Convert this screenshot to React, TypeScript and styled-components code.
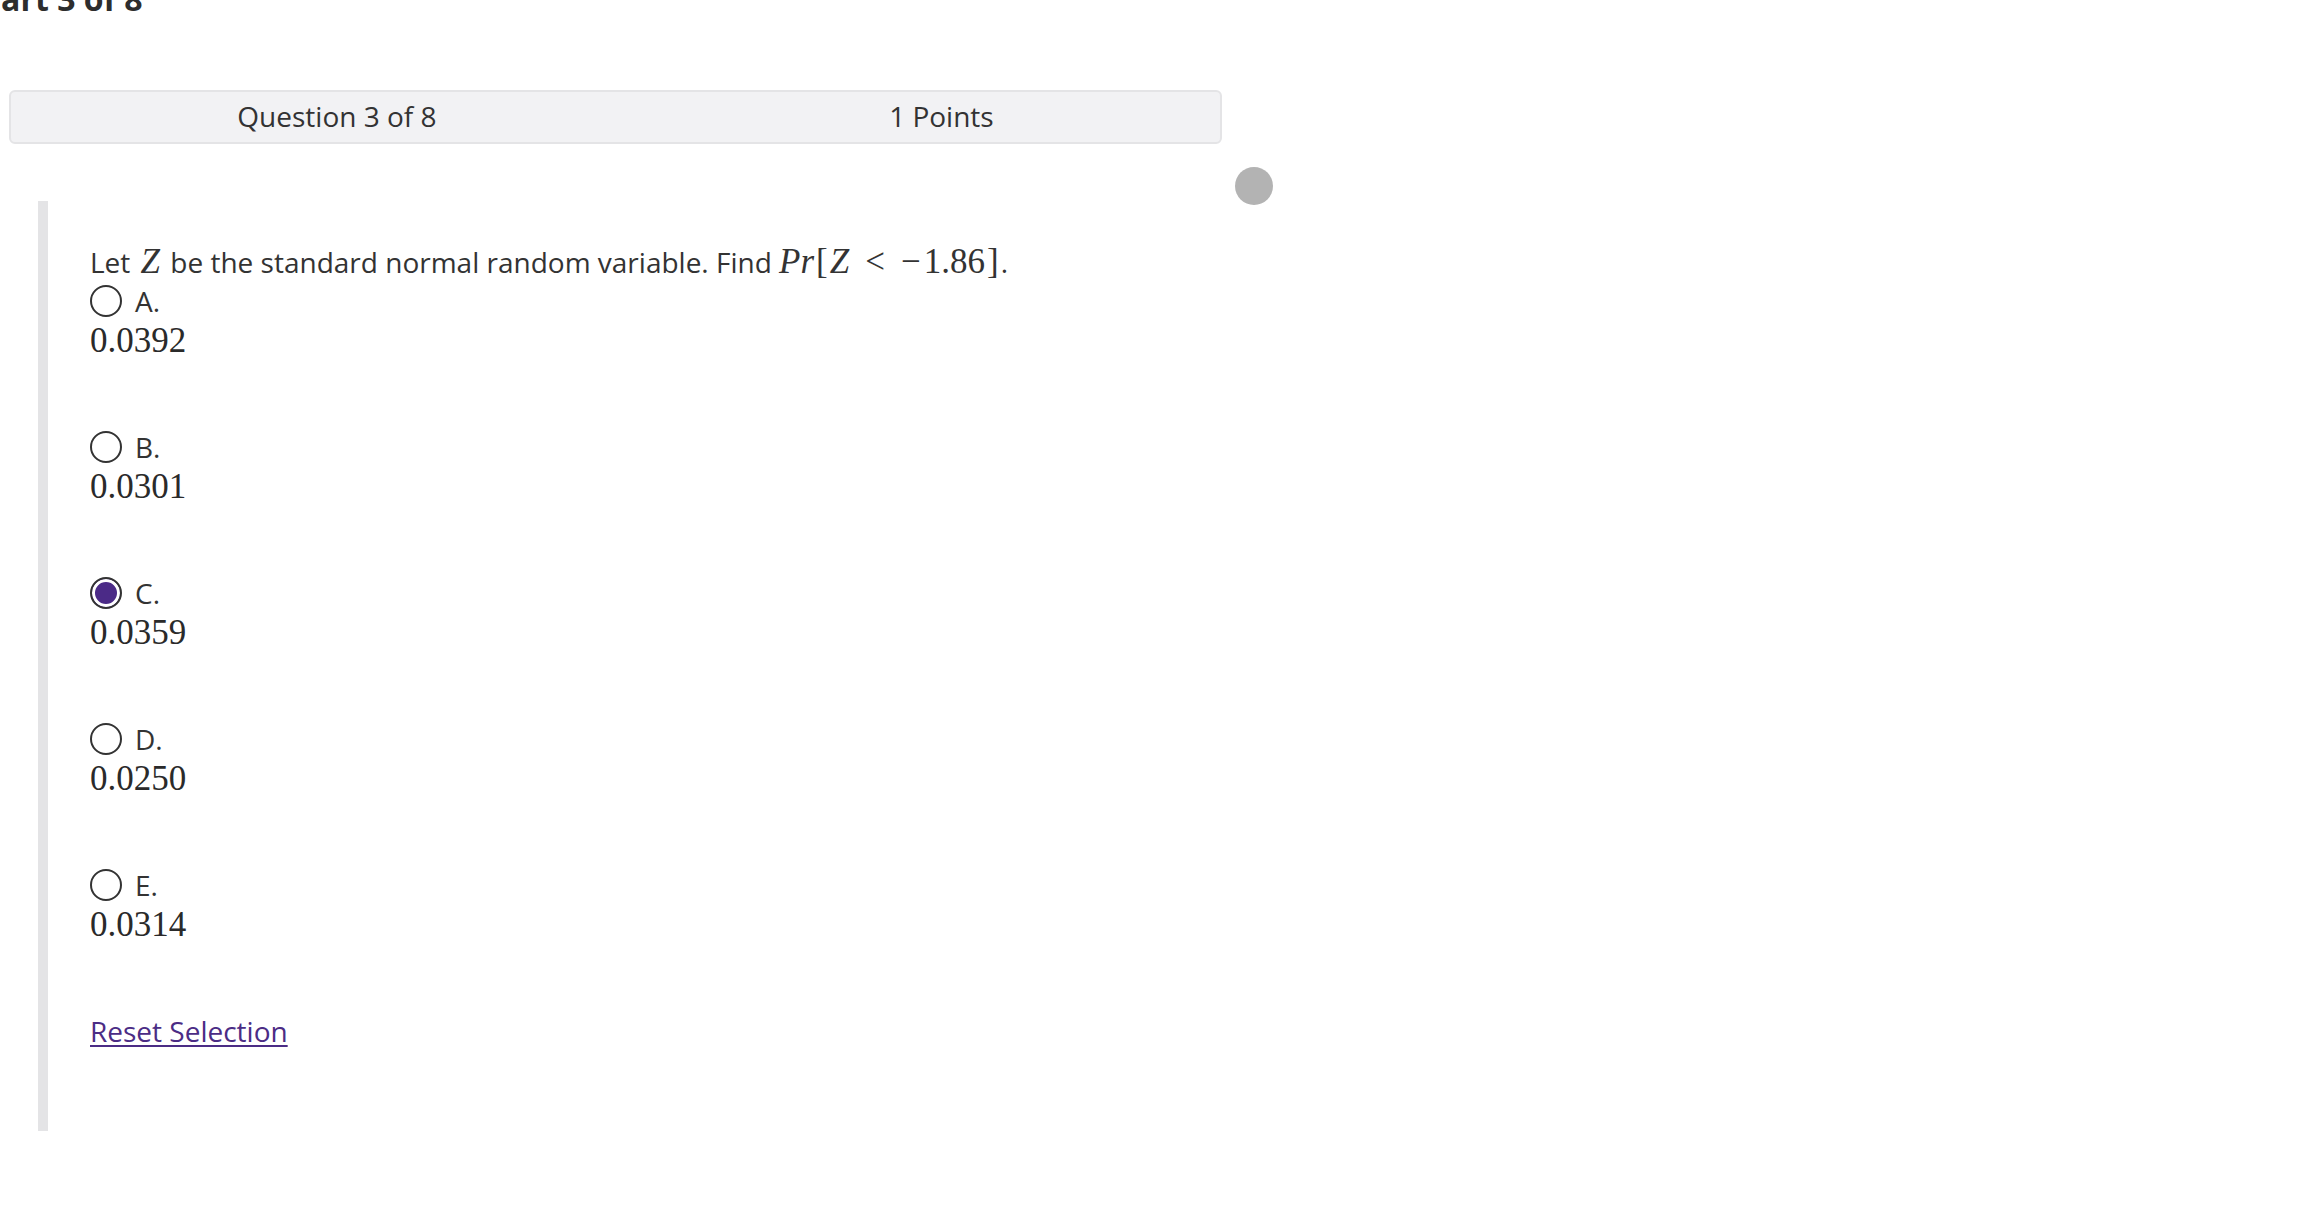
import React from 'react'
import styled, { createGlobalStyle } from 'styled-components'

const GlobalStyle = createGlobalStyle`
  html, body {
    margin: 0;
    padding: 0;
    background: #ffffff;
    overflow: hidden;
  }
  body {
    font-family: "Open Sans", "Noto Sans", sans-serif;
    color: #333333;
  }
`

const Page = styled.div`
  position: relative;
  display: flow-root;
  width: 2319px;
  height: 1218px;
`

const PartTitle = styled.h1`
  margin: -24px 0 0 -19px;
  font-size: 32px;
  line-height: 45px;
  font-weight: 700;
  color: #2d2d2d;
  white-space: nowrap;
`

const QuestionHeader = styled.div`
  display: flex;
  justify-content: space-around;
  align-items: center;
  width: 1213px;
  box-sizing: border-box;
  margin: 69px 0 0 9px;
  padding-bottom: 2px;
  background: #f2f2f4;
  border: 2px solid #e4e4e6;
  border-radius: 6px;
  font-size: 28px;
  line-height: 48px;
  color: #333333;
`

const Spinner = styled.div`
  position: absolute;
  left: 1235px;
  top: 167px;
  width: 38px;
  height: 38px;
  border-radius: 50%;
  background: #b3b3b3;
`

const QuestionBody = styled.div`
  margin: 57px 0 0 38px;
  width: 1180px;
  border-left: 10px solid #e4e4e6;
  padding: 43px 0 80px 42px;
  font-size: 28px;
`

const Prompt = styled.p`
  margin: 0;
  line-height: 37px;
  white-space: nowrap;
`

const Math = styled.span<{ $italic?: boolean; $pad?: number }>`
  font-family: "Liberation Serif", "DejaVu Serif", serif;
  font-size: 35px;
  line-height: 1;
  font-style: ${(p) => (p.$italic ? 'italic' : 'normal')};
  margin: 0 ${(p) => p.$pad ?? 0}px;
`

const Bracket = styled.span`
  margin: 0 2px;
`

const Rel = styled.span`
  margin: 0 16px;
`

const Minus = styled.span`
  margin-right: 3px;
`

const Option = styled.div`
  margin-bottom: 66px;
`

const OptionLabel = styled.label`
  display: flex;
  align-items: center;
  gap: 13px;
  height: 40px;
  line-height: 40px;
  cursor: pointer;
`

const Radio = styled.span<{ $checked?: boolean }>`
  display: inline-block;
  box-sizing: border-box;
  width: 32px;
  height: 32px;
  border-radius: 50%;
  border: 2px solid #333333;
  background: ${(p) => (p.$checked ? '#4b2a87' : '#ffffff')};
  box-shadow: ${(p) => (p.$checked ? 'inset 0 0 0 3px #ffffff' : 'none')};
  flex-shrink: 0;
`

const Value = styled.div`
  font-family: "Liberation Serif", "DejaVu Serif", serif;
  font-size: 35px;
  line-height: 40px;
  color: #2a2a2a;
`

const ResetLink = styled.a`
  display: inline-block;
  line-height: 40px;
  color: #4b2c85;
  text-decoration: underline;
  text-underline-offset: 3px;
  cursor: pointer;
`

const options = [
  { key: 'A', value: '0.0392' },
  { key: 'B', value: '0.0301' },
  { key: 'C', value: '0.0359' },
  { key: 'D', value: '0.0250' },
  { key: 'E', value: '0.0314' },
]

export default function App() {
  const selected = 'C'

  return (
    <>
      <GlobalStyle />
      <Page>
        <PartTitle>Part 3 of 8</PartTitle>
        <QuestionHeader>
          <span>Question 3 of 8</span>
          <span>1 Points</span>
        </QuestionHeader>
        <Spinner />

        <QuestionBody>
          <Prompt>
            Let <Math $italic $pad={3}>Z</Math> be the standard normal random variable. Find{' '}
            <Math $italic>Pr</Math>
            <Math>
              <Bracket>[</Bracket>
            </Math>
            <Math $italic>Z</Math>
            <Math>
              <Rel>&lt;</Rel>
              <Minus>−</Minus>1.86<Bracket>]</Bracket>
            </Math>
            .
          </Prompt>

          {options.map((opt) => (
            <Option key={opt.key}>
              <OptionLabel>
                <Radio $checked={opt.key === selected} />
                <span>{opt.key}.</span>
              </OptionLabel>
              <Value>{opt.value}</Value>
            </Option>
          ))}

          <ResetLink>Reset Selection</ResetLink>
        </QuestionBody>
      </Page>
    </>
  )
}
